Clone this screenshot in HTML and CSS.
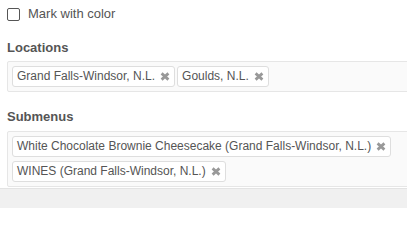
FILE: index.html
```html
<!DOCTYPE html>
<html>
<head>
<meta charset="utf-8">
<link rel="stylesheet" href="styles.css">
</head>
<body>
<div class="page">
  <label class="check-row"><span class="checkbox"></span><span class="check-text">Mark with color</span></label>

  <div class="label loc-label">Locations</div>
  <div class="tagbox">
    <span class="tag">Grand Falls-Windsor, N.L.<svg class="x" viewBox="0 0 10 9" width="10" height="9"><path d="M1.6 1.4 L8.4 7.6 M8.4 1.4 L1.6 7.6"/></svg></span>
    <span class="tag">Goulds, N.L.<svg class="x" viewBox="0 0 10 9" width="10" height="9"><path d="M1.6 1.4 L8.4 7.6 M8.4 1.4 L1.6 7.6"/></svg></span>
  </div>

  <div class="label sub-label">Submenus</div>
  <div class="tagbox">
    <span class="tag">White Chocolate Brownie Cheesecake (Grand Falls-Windsor, N.L.)<svg class="x" viewBox="0 0 10 9" width="10" height="9"><path d="M1.6 1.4 L8.4 7.6 M8.4 1.4 L1.6 7.6"/></svg></span>
    <span class="tag">WINES (Grand Falls-Windsor, N.L.)<svg class="x" viewBox="0 0 10 9" width="10" height="9"><path d="M1.6 1.4 L8.4 7.6 M8.4 1.4 L1.6 7.6"/></svg></span>
  </div>
</div>
<div class="footer"></div>
</body>
</html>
```
FILE: styles.css
```css
html, body {
  margin: 0;
  padding: 0;
  background: #fff;
  overflow: hidden;
}
body {
  font-family: "Liberation Sans", Arial, sans-serif;
  color: #555;
  width: 407px;
  height: 208px;
}
.page {
  padding: 6px 0 0 7px;
}
.check-row {
  display: flex;
  align-items: center;
  gap: 8px;
  height: 16px;
  font-size: 13px;
  line-height: 16px;
}
.checkbox {
  width: 11px;
  height: 11px;
  border: 1px solid #555;
  border-radius: 2px;
  background: #fff;
}
.label {
  font-size: 13px;
  font-weight: bold;
  line-height: 16px;
  color: #555;
}
.loc-label {
  margin-top: 18px;
  margin-bottom: 5px;
}
.sub-label {
  margin-top: 17px;
  margin-bottom: 6px;
}
.tagbox {
  display: flex;
  flex-wrap: wrap;
  gap: 4px 2px;
  margin-right: -12px;
  padding: 4px;
  background: #fafafa;
  border: 1px solid #e6e6e6;
  border-radius: 2px;
}
.tag {
  display: inline-flex;
  align-items: center;
  gap: 5px;
  box-sizing: border-box;
  height: 21px;
  padding: 0 4px;
  font-size: 12px;
  line-height: 19px;
  color: #555;
  background: #fff;
  border: 1px solid #dedede;
  border-radius: 3px;
}
.x {
  display: block;
}
.x path {
  stroke: #999;
  stroke-width: 2.8;
  fill: none;
}
.footer {
  margin-top: 1px;
  height: 40px;
  background: #f0f0f0;
  border-top: 1px solid #e3e3e3;
}
```
